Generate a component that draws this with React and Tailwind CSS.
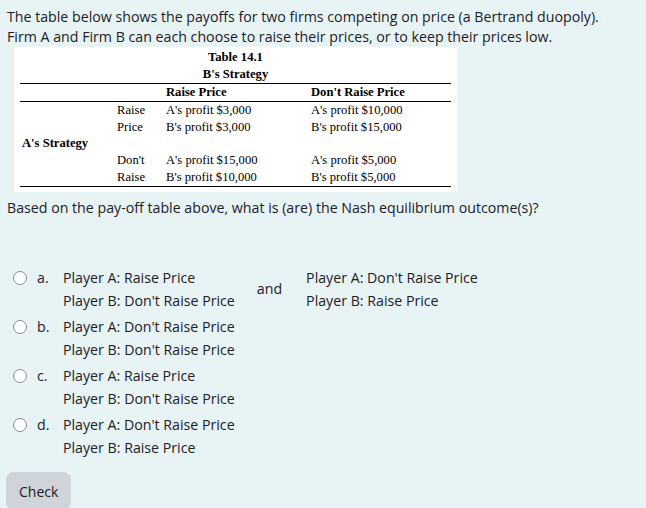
import React from "react";

function Radio() {
  return (
    <span className="inline-block w-[14px] h-[14px] rounded-full border border-[#8a8d90] bg-white shrink-0" />
  );
}

function Option({ letter, lines, extra }) {
  return (
    <div className="flex items-start">
      <div className="flex items-center h-[22px] w-[63px] pl-[13px]">
        <Radio />
        <span className="ml-[10px]">{letter}</span>
      </div>
      <div className="flex flex-col">
        {lines.map((l, i) => (
          <div key={i} className="h-[23px] leading-[22px]">{l}</div>
        ))}
      </div>
      {extra}
    </div>
  );
}

export default function App() {
  return (
    <div className="w-[646px] h-[508px] overflow-hidden bg-[#e7f3f5] text-[#1d2125] text-[14.2px] font-['Open_Sans',sans-serif]">
      <div className="pl-[7px] pt-[7px] leading-[20px]">
        <div>The table below shows the payoffs for two firms competing on price (a Bertrand duopoly).</div>
        <div>Firm A and Firm B can each choose to raise their prices, or to keep their prices low.</div>
      </div>
      <div className="ml-[14px] w-[443px] h-[145px] bg-white text-black text-[12.6px] leading-[17px] font-['Liberation_Serif',serif] pt-[1px]">
        <div className="text-center font-bold h-[18px] leading-[18px]">Table 14.1</div>
        <div className="text-center font-bold h-[17px] leading-[17px]">B's Strategy</div>
        <div className="mx-[6px] border-t border-black" />
        <div className="flex font-bold h-[17px]">
          <div className="w-[152px]" />
          <div className="w-[145px]">Raise Price</div>
          <div>Don't Raise Price</div>
        </div>
        <div className="mx-[6px] border-t border-black" />
        <div className="flex h-[17px]">
          <div className="w-[103px]" />
          <div className="w-[49px]">Raise</div>
          <div className="w-[145px]">A's profit $3,000</div>
          <div>A's profit $10,000</div>
        </div>
        <div className="flex h-[17px]">
          <div className="w-[103px]" />
          <div className="w-[49px]">Price</div>
          <div className="w-[145px]">B's profit $3,000</div>
          <div>B's profit $15,000</div>
        </div>
        <div className="flex h-[16px] leading-[15px]">
          <div className="pl-[8px] font-bold">A's Strategy</div>
        </div>
        <div className="flex h-[17px]">
          <div className="w-[103px]" />
          <div className="w-[49px]">Don't</div>
          <div className="w-[145px]">A's profit $15,000</div>
          <div>A's profit $5,000</div>
        </div>
        <div className="flex h-[17px]">
          <div className="w-[103px]" />
          <div className="w-[49px]">Raise</div>
          <div className="w-[145px]">B's profit $10,000</div>
          <div>B's profit $5,000</div>
        </div>
        <div className="mx-[6px] border-t border-black" />
      </div>
      <div className="pl-[7px] mt-[6px] leading-[20px]">
        Based on the pay-off table above, what is (are) the Nash equilibrium outcome(s)?
      </div>
      <div className="mt-[49px] flex flex-col gap-[3px]">
        <Option
          letter="a."
          lines={["Player A: Raise Price", "Player B: Don't Raise Price"]}
          extra={
            <>
              <div className="ml-[22px] mt-[11px] leading-[22px]">and</div>
              <div className="ml-[24px] flex flex-col">
                <div className="h-[23px] leading-[22px]">Player A: Don't Raise Price</div>
                <div className="h-[23px] leading-[22px]">Player B: Raise Price</div>
              </div>
            </>
          }
        />
        <Option letter="b." lines={["Player A: Don't Raise Price", "Player B: Don't Raise Price"]} />
        <Option letter="c." lines={["Player A: Raise Price", "Player B: Don't Raise Price"]} />
        <Option letter="d." lines={["Player A: Don't Raise Price", "Player B: Raise Price"]} />
      </div>
      <div className="pl-[6px] mt-[12px]">
        <button className="h-[38px] px-[13px] rounded-[8px] bg-[#ced4da] text-[#1d2125] text-[14px]">Check</button>
      </div>
    </div>
  );
}
